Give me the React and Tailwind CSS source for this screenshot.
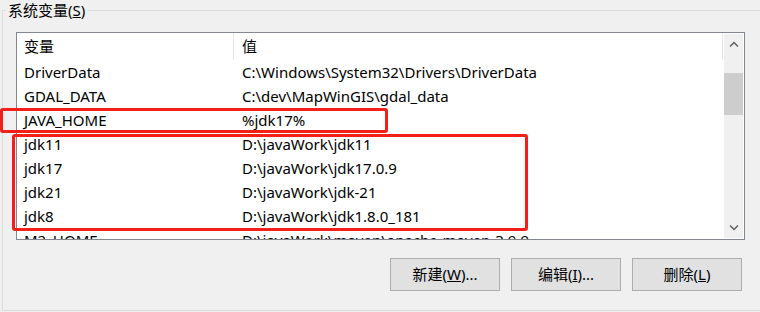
import React from 'react';

const rows = [
  { name: 'DriverData', value: 'C:\\Windows\\System32\\Drivers\\DriverData' },
  { name: 'GDAL_DATA', value: 'C:\\dev\\MapWinGIS\\gdal_data' },
  { name: 'JAVA_HOME', value: '%jdk17%' },
  { name: 'jdk11', value: 'D:\\javaWork\\jdk11' },
  { name: 'jdk17', value: 'D:\\javaWork\\jdk17.0.9' },
  { name: 'jdk21', value: 'D:\\javaWork\\jdk-21' },
  { name: 'jdk8', value: 'D:\\javaWork\\jdk1.8.0_181' },
  { name: 'M2_HOME', value: 'D:\\javaWork\\maven\\apache-maven-3.9.9' },
];

const Chevron = ({ up }) => (
  <svg width="10" height="6" viewBox="0 0 10 6" className="block">
    <polyline
      points={up ? '1,5.5 5,1.5 9,5.5' : '1,0.5 5,4.5 9,0.5'}
      fill="none"
      stroke="#606060"
      strokeWidth="1.5"
    />
  </svg>
);

const WinButton = ({ label, hotkey, suffix }) => (
  <button className="w-[110px] h-[33px] bg-[#e1e1e1] border border-[#adadad] flex items-center justify-center leading-none">
    {label}(<u>{hotkey}</u>){suffix}
  </button>
);

const App = () => {
  return (
    <div className="relative w-[760px] h-[312px] overflow-hidden bg-[#f0f0f0] text-[15px] text-black font-['Noto_Sans','Noto_Sans_CJK_SC',sans-serif]">
      <fieldset className="ml-[2px] w-[800px] h-[311px] border border-[#dcdcdc]">
        <legend className="ml-[3px] px-[2px] leading-[20px]">
          系统变量(<u>S</u>)
        </legend>

        {/* List view */}
        <div className="ml-[13px] mt-[12px] w-[729px] h-[208px] border border-[#828790] bg-white flex">
          <div className="flex-1 flex flex-col overflow-hidden">
            <div className="h-[27px] flex shrink-0">
              <div className="w-[217px] pl-[7px] flex items-center border-r border-[#e5e5e5]">变量</div>
              <div className="flex-1 pl-[8px] flex items-center border-r border-[#e5e5e5]">值</div>
            </div>
            {rows.map(row => (
              <div key={row.name} className="h-[24px] flex shrink-0 whitespace-nowrap">
                <div className="w-[217px] pl-[7px] flex items-center">{row.name}</div>
                <div className="flex-1 pl-[8px] flex items-center">{row.value}</div>
              </div>
            ))}
          </div>

          {/* Scrollbar */}
          <div className="w-[19px] my-[1px] mr-[1px] ml-[1px] bg-[#f0f0f0] flex flex-col">
            <div className="h-[20px] flex items-center justify-center">
              <Chevron up />
            </div>
            <div className="flex-1">
              <div className="mt-[19px] h-[42px] bg-[#cdcdcd]" />
            </div>
            <div className="h-[20px] flex items-center justify-center">
              <Chevron />
            </div>
          </div>
        </div>

        {/* Buttons */}
        <div className="mt-[18px] pl-[387px] flex gap-[11px]">
          <WinButton label="新建" hotkey="W" suffix="..." />
          <WinButton label="编辑" hotkey="I" suffix="..." />
          <WinButton label="删除" hotkey="L" suffix="" />
        </div>
      </fieldset>

      {/* Red annotation boxes */}
      <div className="absolute left-[0px] top-[108px] w-[388px] h-[25px] border-[3px] border-[#f22018] rounded-[3px]" />
      <div className="absolute left-[12px] top-[134px] w-[516px] h-[97px] border-[3px] border-[#f22018] rounded-[3px]" />
    </div>
  );
};

export default App;
